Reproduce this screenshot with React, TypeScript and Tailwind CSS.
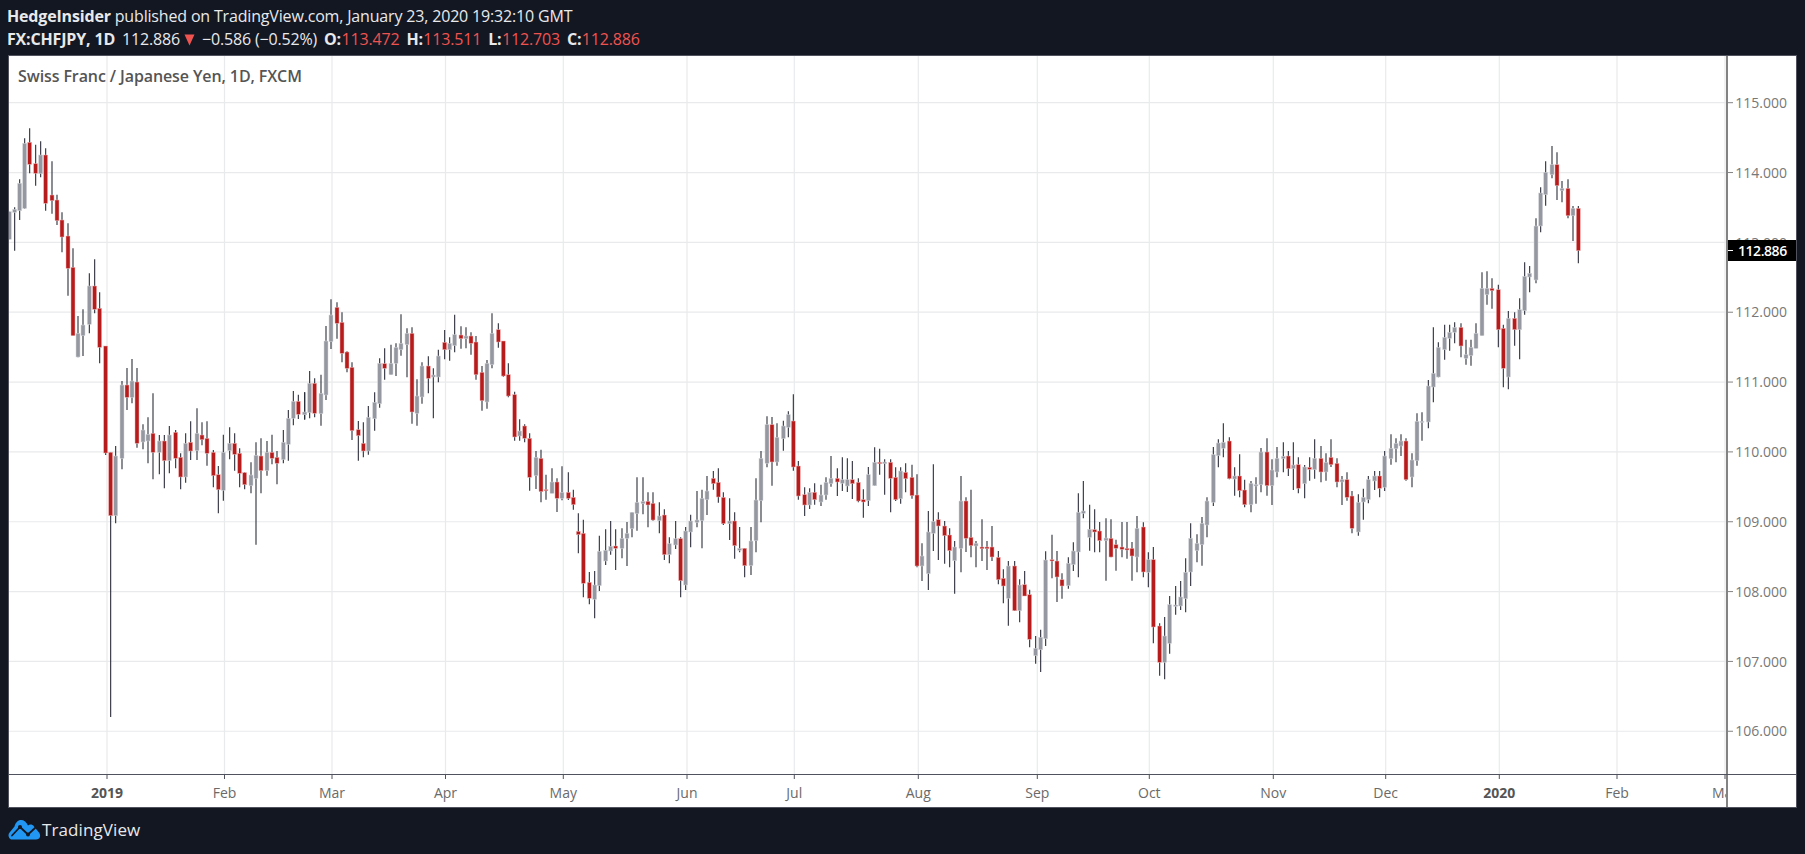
import React from "react";

type Raw = [number, number, number, number, number, "r" | "g"];
type Candle = { x: number; h: number; t: number; b: number; l: number; red: boolean };

const seg = (ox: number, oy: number, rows: Raw[]): Candle[] =>
  rows.map(([z, h, t, b, l, c]) => ({
    x: ox + z / 3,
    h: oy + h / 3,
    t: oy + t / 3,
    b: oy + b / 3,
    l: oy + l / 3,
    red: c === "r",
  }));

const candles: Candle[] = [
  ...seg(0, 100, [
    [28, 335, 335, 418, 418, "g"],
    [44, 322, 328, 337, 452, "g"],
    [59, 238, 250, 332, 360, "g"],
    [74, 115, 130, 325, 326, "g"],
    [89, 85, 127, 193, 220, "r"],
    [107, 134, 191, 220, 257, "r"],
    [122, 124, 165, 221, 232, "g"],
    [137, 145, 165, 310, 332, "r"],
    [156, 184, 285, 302, 341, "r"],
    [171, 284, 300, 362, 375, "r"],
    [186, 337, 360, 411, 457, "r"],
    [204, 370, 408, 505, 587, "r"],
    [219, 445, 502, 707, 707, "r"],
    [234, 648, 700, 771, 772, "g"],
    [249, 628, 675, 707, 768, "g"],
    [268, 520, 558, 673, 700, "g"],
    [284, 478, 558, 628, 640, "r"],
    [299, 577, 625, 742, 790, "r"],
    [317, 738, 738, 1059, 1065, "r"],
  ]),
  ...seg(60, 380, [
    [152, 217, 217, 407, 1011, "r"],
    [167, 198, 228, 407, 430, "g"],
    [186, 3, 15, 235, 268, "g"],
    [201, -36, 15, 52, 90, "r"],
    [216, -63, 3, 52, 70, "g"],
    [231, -36, 6, 190, 203, "r"],
    [249, 133, 150, 186, 208, "g"],
    [264, 112, 163, 183, 250, "g"],
    [279, 40, 160, 217, 298, "r"],
    [298, 165, 183, 217, 283, "g"],
    [313, 165, 183, 242, 325, "r"],
    [328, 138, 165, 242, 280, "g"],
    [347, 150, 157, 235, 265, "r"],
    [362, 220, 232, 291, 328, "r"],
    [377, 160, 190, 291, 308, "g"],
    [392, 124, 187, 213, 240, "r"],
    [411, 85, 160, 212, 240, "g"],
    [426, 127, 165, 179, 196, "r"],
    [441, 124, 175, 220, 257, "r"],
    [460, 210, 217, 287, 322, "r"],
    [475, 258, 284, 329, 400, "r"],
    [490, 164, 217, 331, 362, "g"],
    [509, 142, 190, 212, 238, "g"],
    [524, 160, 190, 223, 272, "r"],
    [539, 205, 220, 280, 322, "r"],
    [554, 277, 278, 314, 328, "r"],
    [573, 247, 285, 317, 340, "g"],
    [588, 187, 226, 295, 494, "g"],
    [603, 175, 228, 272, 340, "r"],
    [621, 183, 217, 272, 287, "g"],
    [636, 164, 217, 235, 253, "r"],
    [651, 213, 232, 250, 313, "r"],
    [670, 150, 187, 239, 250, "g"],
    [685, 90, 115, 193, 242, "g"],
    [700, 33, 64, 115, 136, "g"],
    [715, 44, 64, 103, 117, "r"],
    [734, 37, 97, 104, 119, "g"],
  ]),
  ...seg(300, 280, [
    [14, 337, 396, 404, 418, "g"],
    [29, 273, 310, 398, 415, "g"],
    [44, 295, 310, 400, 412, "r"],
    [63, 284, 340, 401, 437, "g"],
    [78, 138, 183, 345, 360, "g"],
    [93, 58, 105, 185, 207, "g"],
    [111, 67, 82, 130, 176, "r"],
    [126, 97, 127, 220, 247, "r"],
    [141, 214, 216, 265, 277, "r"],
    [156, 247, 262, 452, 480, "r"],
    [175, 423, 449, 467, 542, "r"],
    [190, 427, 490, 513, 532, "r"],
    [205, 378, 412, 513, 524, "g"],
    [224, 337, 367, 416, 452, "g"],
    [239, 235, 250, 371, 383, "g"],
    [254, 205, 251, 265, 299, "r"],
    [273, 194, 250, 284, 285, "g"],
    [288, 190, 202, 250, 288, "g"],
    [303, 103, 190, 209, 227, "g"],
    [321, 145, 160, 194, 292, "g"],
    [336, 142, 160, 396, 431, "r"],
    [351, 298, 348, 400, 437, "g"],
    [366, 247, 258, 351, 371, "g"],
    [385, 229, 258, 295, 340, "r"],
    [400, 265, 285, 291, 415, "g"],
    [415, 209, 228, 291, 307, "g"],
    [434, 150, 187, 209, 238, "r"],
    [449, 172, 190, 209, 242, "g"],
    [464, 104, 164, 197, 217, "g"],
    [483, 139, 165, 176, 206, "r"],
    [498, 142, 168, 176, 205, "g"],
    [513, 157, 168, 190, 224, "r"],
    [528, 168, 186, 284, 299, "r"],
    [546, 258, 277, 362, 392, "r"],
    [561, 240, 250, 366, 386, "g"],
    [576, 100, 160, 254, 265, "g"],
    [595, 130, 149, 186, 203, "r"],
    [610, 183, 183, 288, 290, "r"],
    [625, 250, 284, 348, 352, "r"],
    [644, 335, 344, 471, 482, "r"],
    [659, 418, 453, 468, 482, "g"],
    [674, 433, 438, 475, 487, "r"],
    [689, 460, 475, 592, 632, "r"],
    [708, 513, 532, 587, 627, "g"],
    [723, 509, 535, 635, 667, "r"],
    [738, 584, 629, 632, 659, "r"],
    [756, 565, 606, 640, 640, "g"],
    [771, 595, 606, 655, 696, "r"],
    [786, 559, 637, 655, 661, "g"],
    [805, 577, 637, 655, 660, "r"],
    [820, 629, 652, 674, 689, "r"],
    [835, 700, 754, 764, 820, "r"],
  ]),
  ...seg(560, 390, [
    [70, 389, 430, 580, 622, "r"],
    [88, 546, 577, 625, 643, "r"],
    [104, 543, 585, 628, 685, "g"],
    [118, 437, 484, 587, 603, "g"],
    [137, 418, 481, 513, 525, "g"],
    [152, 393, 469, 483, 494, "g"],
    [167, 418, 468, 475, 540, "r"],
    [186, 415, 445, 475, 505, "g"],
    [201, 396, 430, 445, 528, "g"],
    [216, 367, 367, 416, 442, "g"],
    [231, 262, 337, 371, 422, "g"],
    [249, 262, 334, 341, 373, "g"],
    [264, 307, 334, 345, 412, "r"],
    [279, 307, 340, 390, 392, "r"],
    [298, 337, 378, 392, 430, "g"],
    [313, 358, 375, 494, 510, "r"],
    [328, 442, 461, 494, 520, "g"],
    [347, 393, 446, 465, 477, "g"],
    [362, 442, 446, 572, 622, "r"],
    [377, 411, 423, 585, 600, "g"],
    [392, 374, 393, 426, 472, "g"],
    [411, 303, 390, 397, 412, "g"],
    [426, 299, 325, 392, 475, "g"],
    [441, 258, 303, 329, 375, "g"],
    [460, 243, 265, 281, 299, "r"],
    [475, 235, 277, 321, 338, "r"],
    [490, 307, 322, 401, 405, "r"],
    [509, 325, 393, 401, 450, "g"],
    [524, 367, 393, 467, 506, "r"],
    [539, 411, 475, 481, 487, "g"],
    [554, 475, 475, 527, 562, "r"],
    [573, 411, 453, 527, 555, "g"],
    [588, 265, 330, 452, 487, "g"],
    [603, 183, 205, 332, 397, "g"],
    [621, 79, 104, 220, 232, "g"],
    [636, 81, 104, 216, 287, "r"],
    [651, 100, 142, 216, 227, "g"],
    [670, 92, 108, 146, 182, "g"],
    [685, 64, 74, 112, 142, "g"],
    [700, 13, 93, 231, 242, "r"],
    [715, 213, 228, 318, 329, "r"],
    [734, 292, 314, 345, 378, "r"],
    [749, 295, 307, 345, 357, "g"],
    [764, 280, 307, 329, 344, "r"],
    [783, 284, 315, 336, 348, "g"],
    [798, 262, 277, 315, 329, "g"],
    [813, 198, 265, 281, 290, "g"],
    [832, 235, 265, 276, 318, "r"],
    [847, 202, 269, 280, 303, "g"],
    [862, 205, 269, 288, 306, "g"],
    [877, 213, 269, 281, 327, "r"],
  ]),
  ...seg(850, 430, [
    [25, 145, 157, 213, 217, "r"],
    [40, 178, 209, 216, 263, "r"],
    [55, 111, 134, 212, 228, "g"],
    [74, 52, 97, 167, 167, "g"],
    [89, 56, 97, 101, 134, "r"],
    [104, 88, 96, 101, 194, "g"],
    [122, 88, 97, 145, 247, "r"],
    [137, 112, 142, 209, 213, "r"],
    [152, 112, 123, 206, 221, "g"],
    [167, 100, 127, 146, 187, "r"],
    [186, 104, 142, 197, 206, "r"],
    [201, 133, 195, 408, 412, "r"],
    [216, 340, 378, 408, 453, "g"],
    [235, 243, 306, 431, 480, "g"],
    [250, 103, 274, 310, 363, "g"],
    [265, 247, 269, 288, 390, "r"],
    [284, 273, 288, 317, 401, "r"],
    [299, 295, 315, 362, 412, "r"],
    [314, 333, 351, 392, 491, "g"],
    [333, 138, 213, 355, 427, "g"],
    [348, 202, 213, 325, 366, "r"],
    [363, 179, 322, 347, 382, "r"],
    [378, 333, 340, 348, 412, "g"],
    [396, 268, 351, 356, 393, "r"],
    [411, 333, 351, 356, 420, "r"],
    [426, 288, 351, 381, 393, "r"],
    [445, 363, 382, 449, 463, "r"],
    [460, 418, 445, 468, 520, "r"],
    [475, 393, 408, 505, 587, "g"],
    [494, 393, 408, 542, 543, "r"],
    [509, 448, 465, 542, 577, "g"],
    [524, 423, 464, 498, 498, "r"],
    [539, 479, 494, 628, 652, "r"],
    [557, 618, 655, 677, 701, "g"],
    [572, 599, 622, 659, 726, "g"],
    [587, 364, 390, 626, 648, "g"],
    [606, 314, 389, 393, 445, "r"],
    [621, 363, 393, 441, 516, "r"],
    [636, 430, 449, 468, 506, "r"],
    [655, 382, 400, 467, 476, "g"],
    [670, 337, 363, 404, 423, "g"],
    [685, 190, 247, 366, 442, "g"],
    [700, 153, 243, 250, 265, "g"],
    [719, 224, 298, 322, 362, "g"],
    [734, 238, 299, 306, 367, "r"],
    [749, 276, 303, 332, 367, "r"],
    [768, 265, 324, 332, 452, "g"],
    [783, 268, 325, 381, 382, "r"],
    [798, 329, 344, 355, 422, "r"],
    [816, 276, 351, 358, 382, "r"],
    [831, 276, 355, 360, 386, "r"],
    [846, 336, 355, 378, 452, "r"],
    [861, 258, 295, 381, 427, "g"],
  ]),
  ...seg(1140, 410, [
    [10, 337, 351, 486, 502, "r"],
    [25, 427, 449, 487, 532, "g"],
    [40, 411, 449, 651, 700, "r"],
    [59, 640, 648, 757, 797, "r"],
    [74, 621, 678, 757, 808, "g"],
    [89, 558, 584, 700, 731, "g"],
    [107, 528, 585, 589, 614, "g"],
    [122, 513, 561, 588, 600, "g"],
    [137, 445, 487, 566, 607, "g"],
    [152, 340, 385, 486, 528, "g"],
    [171, 373, 400, 422, 457, "g"],
    [186, 321, 340, 404, 467, "g"],
    [201, 262, 273, 345, 382, "g"],
    [220, 111, 134, 277, 288, "g"],
    [235, 88, 99, 137, 172, "g"],
    [250, 40, 97, 115, 142, "g"],
    [268, 82, 93, 206, 208, "r"],
    [284, 172, 198, 207, 257, "g"],
    [299, 133, 198, 242, 262, "r"],
    [314, 209, 240, 284, 292, "r"],
    [333, 213, 220, 284, 307, "g"],
    [348, 202, 224, 228, 281, "g"],
    [363, 114, 126, 224, 247, "g"],
    [381, 85, 126, 227, 257, "r"],
    [396, 148, 180, 227, 285, "g"],
    [411, 111, 145, 186, 202, "g"],
    [430, 97, 139, 146, 187, "g"],
    [445, 123, 138, 176, 198, "r"],
    [460, 97, 165, 176, 240, "g"],
    [475, 142, 164, 235, 250, "r"],
    [494, 165, 171, 221, 265, "g"],
    [509, 142, 172, 178, 212, "r"],
    [524, 88, 145, 179, 206, "g"],
    [543, 108, 145, 186, 217, "r"],
    [558, 130, 157, 186, 212, "g"],
    [573, 88, 142, 164, 171, "r"],
    [591, 145, 160, 216, 232, "r"],
    [606, 198, 209, 216, 285, "g"],
    [621, 187, 209, 262, 272, "r"],
    [636, 243, 258, 355, 370, "r"],
    [655, 253, 277, 366, 377, "g"],
    [670, 236, 262, 276, 329, "g"],
    [685, 198, 209, 269, 280, "g"],
    [704, 183, 198, 213, 240, "g"],
    [719, 183, 198, 235, 262, "r"],
    [734, 123, 138, 232, 243, "g"],
    [753, 73, 115, 146, 164, "g"],
    [768, 85, 100, 116, 157, "g"],
    [783, 73, 93, 108, 138, "g"],
    [798, 85, 93, 209, 212, "r"],
  ]),
  ...seg(1400, 250, [
    [36, 610, 630, 681, 712, "g"],
    [51, 490, 514, 632, 647, "g"],
    [66, 487, 514, 516, 572, "g"],
    [85, 390, 408, 516, 535, "g"],
    [100, 232, 370, 411, 457, "g"],
    [115, 277, 292, 381, 382, "g"],
    [134, 224, 262, 299, 329, "g"],
    [149, 224, 247, 265, 302, "g"],
    [164, 217, 232, 247, 280, "g"],
    [183, 220, 232, 288, 322, "r"],
    [198, 269, 314, 325, 344, "g"],
    [213, 269, 292, 317, 347, "g"],
    [228, 220, 250, 295, 295, "g"],
    [246, 67, 115, 257, 257, "g"],
    [261, 64, 115, 134, 164, "g"],
    [276, 85, 115, 122, 176, "r"],
    [295, 104, 119, 239, 292, "r"],
    [310, 224, 235, 355, 412, "r"],
    [325, 183, 205, 381, 418, "g"],
    [344, 187, 205, 239, 287, "r"],
    [359, 145, 179, 239, 328, "g"],
    [374, 37, 79, 182, 194, "g"],
    [389, 48, 70, 81, 127, "g"],
  ]),
  ...seg(1500, 40, [
    [108, 535, 558, 720, 730, "g"],
    [122, 442, 459, 558, 577, "g"],
    [137, 364, 397, 464, 497, "g"],
    [156, 318, 374, 404, 415, "g"],
    [171, 337, 374, 437, 480, "r"],
    [186, 423, 445, 452, 487, "g"],
    [204, 418, 445, 527, 535, "r"],
    [219, 498, 505, 527, 603, "g"],
    [235, 498, 505, 632, 670, "r"],
  ]),
];

const PANE_X = 9;
const PANE_Y = 56;
const PANE_W = 1717;
const PANE_H = 718;
const priceY = (p: number) => 102.7 + (115 - p) * 69.84 - PANE_Y;
const prices = [115, 114, 113, 112, 111, 110, 109, 108, 107, 106];
const months: [number, string, boolean][] = [
  [107, "2019", true],
  [224.5, "Feb", false],
  [332, "Mar", false],
  [445.5, "Apr", false],
  [563.3, "May", false],
  [687, "Jun", false],
  [794.3, "Jul", false],
  [918.3, "Aug", false],
  [1037.3, "Sep", false],
  [1149.3, "Oct", false],
  [1273.3, "Nov", false],
  [1385.7, "Dec", false],
  [1499.3, "2020", true],
  [1617, "Feb", false],
  [1725, "Mar", false],
];

const FONT = "'Open Sans','Noto Sans','Liberation Sans',sans-serif";

function Chart() {
  return (
    <svg width={PANE_W} height={PANE_H} viewBox={`${PANE_X} ${PANE_Y} ${PANE_W} ${PANE_H}`} className="block">
      {prices.map((p) => (
        <line key={p} x1={PANE_X} x2={PANE_X + PANE_W} y1={priceY(p) + PANE_Y} y2={priceY(p) + PANE_Y} stroke="#e9eaec" strokeWidth={1.2} />
      ))}
      {months.map(([x, n]) => (
        <line key={`${n}${x}`} x1={x} x2={x} y1={PANE_Y} y2={PANE_Y + PANE_H} stroke="#e9eaec" strokeWidth={1.2} />
      ))}
      {candles.map((c, i) => (
        <g key={i}>
          <line x1={c.x} x2={c.x} y1={c.h} y2={c.l} stroke="#2a2e39" strokeWidth={1.1} />
          <rect
            x={c.x - 2}
            y={c.t}
            width={4}
            height={Math.max(c.b - c.t, 1)}
            fill={c.red ? "#b71c1c" : "#9598a1"}
            stroke={c.red ? "#f2b5b5" : "#d6d7db"}
            strokeWidth={0.5}
          />
        </g>
      ))}
    </svg>
  );
}

function PriceAxis() {
  return (
    <svg width={68} height={PANE_H} viewBox={`0 ${PANE_Y} 68 ${PANE_H}`} className="block" style={{ fontFamily: FONT }}>
      {prices.map((p) => (
        <g key={p}>
          <line x1={0} x2={5} y1={priceY(p) + PANE_Y} y2={priceY(p) + PANE_Y} stroke="#838383" strokeWidth={1} />
          <text x={59} y={priceY(p) + PANE_Y + 5.2} textAnchor="end" fontSize={14} fill="#787878">
            {p.toFixed(3)}
          </text>
        </g>
      ))}
    </svg>
  );
}

function TimeAxis() {
  return (
    <svg width={PANE_W} height={32} viewBox={`9 775 ${PANE_W} 32`} className="block shrink-0" style={{ fontFamily: FONT }}>
      {months.map(([x, n, bold]) => (
        <g key={`${n}${x}`}>
          <line x1={x} x2={x} y1={775} y2={779} stroke="#50535e" strokeWidth={1} />
          <text x={x} y={798} textAnchor="middle" fontSize={14} fontWeight={bold ? 700 : 400} fill={bold ? "#555555" : "#6a6a6a"}>
            {n}
          </text>
        </g>
      ))}
    </svg>
  );
}

function Logo() {
  return (
    <svg width={33} height={21} viewBox="0 0 33 21" className="block shrink-0">
      <path
        d="M0.5 16 C0.5 15 1 14 2 13 L6.5 7.5 C7.5 3.5 10 1 13 1 C16 1 18.5 3 20 6.5 C21.5 5 24.5 5 26 7.5 L31 13.5 C33 16 32.5 20.5 28 20.5 L4 20.5 C1.5 20.5 0.5 18 0.5 16 Z"
        fill="#2196f3"
      />
      <path d="M4 16.5 L12 8 L20 15.5 L27 9" fill="none" stroke="#131722" strokeWidth={1.8} strokeLinecap="round" strokeLinejoin="round" />
      <circle cx={12} cy={8} r={2} fill="#131722" />
      <circle cx={20} cy={15.5} r={2} fill="#131722" />
    </svg>
  );
}

export default function App() {
  return (
    <div className="flex h-[854px] w-[1805px] flex-col overflow-hidden bg-[#131722]" style={{ fontFamily: FONT }}>
      <header className="flex h-[55px] shrink-0 flex-col pl-[7px] pt-[5px] text-[16px] leading-[23px] tracking-[-0.17px] text-[#e8e9eb]">
        <div>
          <span className="font-bold">HedgeInsider</span> published on TradingView.com, January 23, 2020 19:32:10 GMT
        </div>
        <div className="flex items-center gap-[7px] whitespace-pre">
          <span className="font-bold">FX:CHFJPY, 1D</span>
          <span className="flex items-center gap-[4px]">
            112.886
            <svg width={11} height={12} viewBox="0 0 11 12" className="block">
              <path d="M0.5 0.5 H10.5 L5.5 11.5 Z" fill="#ef5350" />
            </svg>
          </span>
          <span>−0.586 (−0.52%)</span>
          <span className="font-bold">O:<span className="ml-[0.5px] font-normal text-[#ef5350]">113.472</span></span>
          <span className="font-bold">H:<span className="ml-[0.5px] font-normal text-[#ef5350]">113.511</span></span>
          <span className="font-bold">L:<span className="ml-[0.5px] font-normal text-[#ef5350]">112.703</span></span>
          <span className="font-bold">C:<span className="ml-[0.5px] font-normal text-[#ef5350]">112.886</span></span>
        </div>
      </header>

      <main className="relative ml-[8px] flex h-[753px] w-[1789px] shrink-0 flex-col border border-[#50535e] bg-white">
        <div className="flex h-[718px] shrink-0">
          <div className="relative h-[718px] w-[1717px] shrink-0">
            <Chart />
            <div className="absolute left-[9px] top-[10px] text-[16px] font-semibold leading-5 tracking-[-0.1px] text-[#555555]">
              Swiss Franc / Japanese Yen, 1D, FXCM
            </div>
          </div>
          <div className="relative h-[718px] w-[70px] shrink-0 border-l-2 border-[#838383]">
            <PriceAxis />
            <div className="absolute left-0 right-0 top-[184px] flex h-[21px] items-center bg-black pl-[10px] text-[14px] font-semibold tracking-[-0.45px] text-white">
              <span className="absolute left-0 h-px w-[5px] bg-white" />
              112.886
            </div>
          </div>
        </div>
        <div className="flex h-[33px] shrink-0 border-t border-[#50535e]">
          <TimeAxis />
          <div className="h-full w-[70px] shrink-0 border-l-2 border-[#838383]" />
        </div>
      </main>

      <footer className="flex flex-1 items-center gap-[1px] pb-[3px] pl-[8px] text-[17px] tracking-[0.1px] text-[#e8e9eb]">
        <Logo />
        <span>TradingView</span>
      </footer>
    </div>
  );
}
